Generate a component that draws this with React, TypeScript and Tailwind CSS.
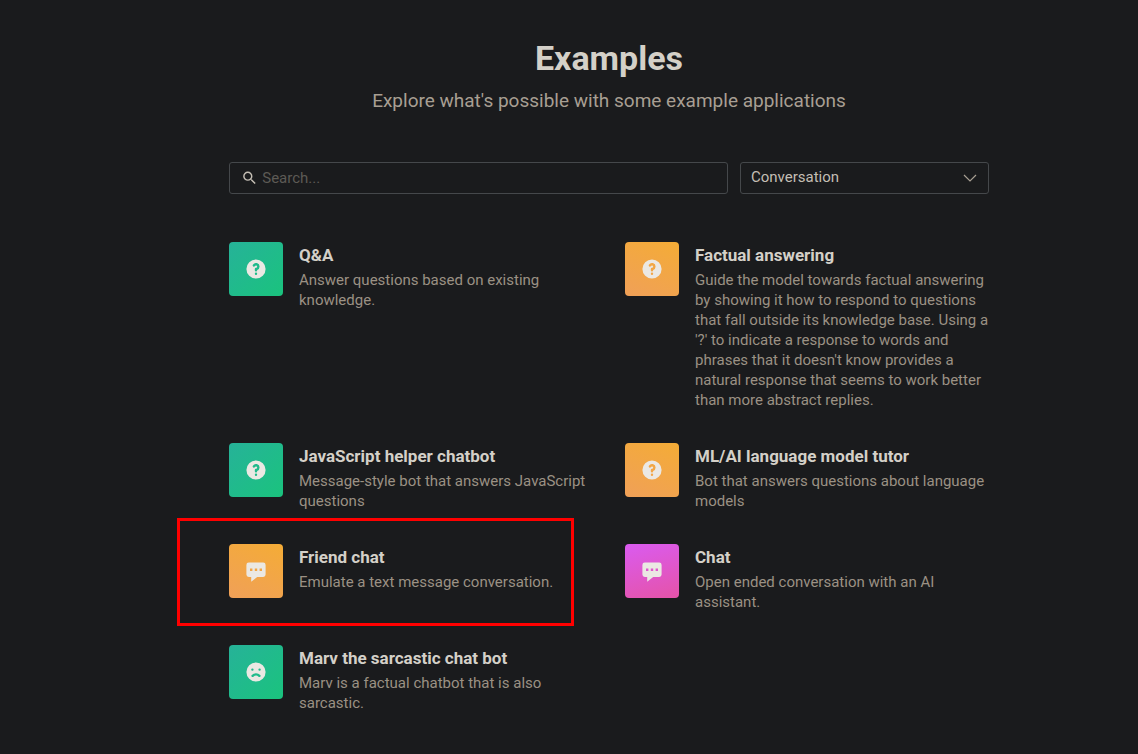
import { useState } from "react";
import { HiChatAlt, HiEmojiSad, HiQuestionMarkCircle } from "react-icons/hi";
import { MdSearch } from "react-icons/md";

const tints = {
    green: "bg-linear-to-br from-[#26b298] to-[#1ac37d]",
    orange: "bg-linear-[25deg] from-[#f0a058] to-[#f4ac36]",
    pink: "bg-linear-[165deg] from-[#da5bf0] to-[#e553a8]",
}

const examples = [
    { title: "Q&A", text: "Answer questions based on existing knowledge.", icon: HiQuestionMarkCircle, tint: tints.green },
    { title: "Factual answering", text: "Guide the model towards factual answering by showing it how to respond to questions that fall outside its knowledge base. Using a '?' to indicate a response to words and phrases that it doesn't know provides a natural response that seems to work better than more abstract replies.", icon: HiQuestionMarkCircle, tint: tints.orange },
    { title: "JavaScript helper chatbot", text: "Message-style bot that answers JavaScript questions", icon: HiQuestionMarkCircle, tint: tints.green },
    { title: "ML/AI language model tutor", text: "Bot that answers questions about language models", icon: HiQuestionMarkCircle, tint: tints.orange },
    { title: "Friend chat", text: "Emulate a text message conversation.", icon: HiChatAlt, tint: tints.orange, marked: true },
    { title: "Chat", text: "Open ended conversation with an AI assistant.", icon: HiChatAlt, tint: tints.pink },
    { title: "Marv the sarcastic chat bot", text: "Marv is a factual chatbot that is also sarcastic.", icon: HiEmojiSad, tint: tints.green },
]

type Example = typeof examples[number]

const ExampleCard = ({ title, text, icon: Icon, tint, marked }: Example) => {
    return <a href="#" className="relative flex min-h-[69px] gap-4">
        <div className={`flex size-[54px] shrink-0 items-center justify-center rounded text-[#ebe8e3] ${tint}`}>
            <Icon className="size-6"/>
        </div>
        <div className="pt-[3px] pb-px">
            <h2 className="mb-[5px] text-[17px] leading-5 font-bold text-[#d4d0c8]">{title}</h2>
            <p className="text-[15px] leading-5 text-[#9b9184]">{text}</p>
        </div>
        {marked && <span className="absolute -top-[26px] right-[19px] -bottom-[13px] -left-[52px] border-3 border-[#ff0000]"/>}
    </a>
}

export default function App() {
    const [search, setSearch] = useState("")
    const [category, setCategory] = useState("Conversation")

    return <main className="min-h-screen bg-[#1a1b1d] pr-4 pb-10 pl-24 font-['Roboto',sans-serif]">
        <div className="mx-auto max-w-[760px] pt-10">
            <header className="text-center">
                <h1 className="text-[34px] leading-9 font-bold text-[#d4d0c8]">Examples</h1>
                <p className="mt-3 text-[19px] leading-[26px] text-[#a89f93]">Explore what's possible with some example applications</p>
            </header>
            <div className="mt-12 flex gap-3">
                <label className="flex h-8 flex-1 items-center gap-1 rounded-[3px] border border-[#45484b] pl-[11px]">
                    <MdSearch className="size-[18px] text-[#c4beb4]"/>
                    <input type="text" aria-label="Search examples" placeholder="Search..." value={search} onChange={(e) => setSearch(e.target.value)} className="w-full bg-transparent text-[15px] leading-5 text-[#c4beb4] placeholder:text-[#5d5a55] focus:outline-none"/>
                </label>
                <div className="relative w-[249px]">
                    <select aria-label="Category" value={category} onChange={(e) => setCategory(e.target.value)} className="h-8 w-full appearance-none rounded-[3px] border border-[#45484b] bg-transparent px-[10px] pb-[2px] text-[15px] text-[#c4beb4] focus:outline-none">
                        <option>Conversation</option>
                    </select>
                    <svg viewBox="0 0 14 8" className="pointer-events-none absolute top-3 right-3 h-2 w-[14px] text-[#a89f93]" fill="none" stroke="currentColor" strokeWidth="1.2">
                        <path d="M1 1l6 6 6-6"/>
                    </svg>
                </div>
            </div>
            <div className="mt-12 grid grid-cols-2 gap-8">
                {examples.map((example) => <ExampleCard key={example.title} {...example}/>)}
            </div>
        </div>
    </main>
}
